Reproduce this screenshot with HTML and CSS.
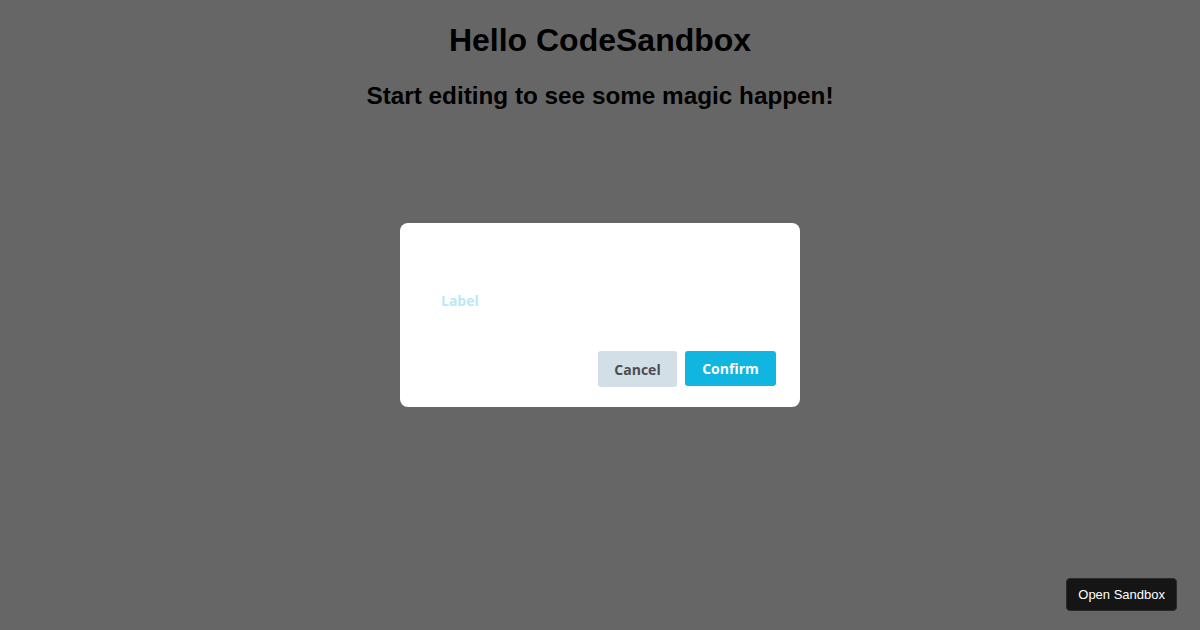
FILE: index.html
```html
<!DOCTYPE html>
<html>
<head>
<meta charset="utf-8">
<link rel="stylesheet" href="styles.css">
</head>
<body>
<div class="app">
  <h1>Hello CodeSandbox</h1>
  <h2>Start editing to see some magic happen!</h2>
</div>
<div class="overlay">
  <div class="modal">
    <div class="modal-body">
      <span class="label">Label</span>
    </div>
    <div class="modal-actions">
      <button class="btn btn-cancel">Cancel</button>
      <button class="btn btn-confirm">Confirm</button>
    </div>
  </div>
</div>
<a class="open-sandbox">Open Sandbox</a>
</body>
</html>
```
FILE: styles.css
```css
html, body {
  height: 100%;
}
body {
  margin: 0;
  font-family: "Liberation Sans", Arial, sans-serif;
  background: #fff;
}
.app {
  text-align: center;
  padding-top: 22px;
}
.app h1 {
  font-size: 32px;
  margin: 0 0 23px;
}
.app h2 {
  font-size: 24.3px;
  margin: 0;
}
.overlay {
  position: fixed;
  inset: 0;
  background: rgba(0, 0, 0, 0.6);
  display: flex;
  align-items: center;
  justify-content: center;
}
.modal {
  width: 400px;
  height: 184px;
  background: #fff;
  border-radius: 8px;
  box-sizing: border-box;
  display: flex;
  flex-direction: column;
  padding: 0 24px 20px 41px;
}
.modal-body {
  flex: 1;
  display: flex;
  align-items: center;
  padding-top: 26px;
}
.label {
  font-family: "Open Sans", sans-serif;
  font-weight: 700;
  font-size: 14px;
  color: #b8e9f5;
}
.modal-actions {
  display: flex;
  justify-content: flex-end;
  gap: 8px;
}
.btn {
  font-family: "Open Sans", sans-serif;
  font-weight: 700;
  font-size: 14px;
  height: 36px;
  border: none;
  border-radius: 3px;
  padding: 0;
  cursor: pointer;
}
.btn-cancel {
  background: #d3dfe6;
  color: #4a4d52;
  width: 79px;
}
.btn-confirm {
  background: #10b5e0;
  color: #fff;
  width: 91px;
  height: 35px;
}
.open-sandbox {
  position: fixed;
  right: 23px;
  bottom: 19px;
  background: #151515;
  color: #fff;
  font-family: "Liberation Sans", Arial, sans-serif;
  font-size: 13px;
  border: 1px solid #2a2a2a;
  border-radius: 4px;
  padding: 8px 11px;
  line-height: 15px;
}
```
